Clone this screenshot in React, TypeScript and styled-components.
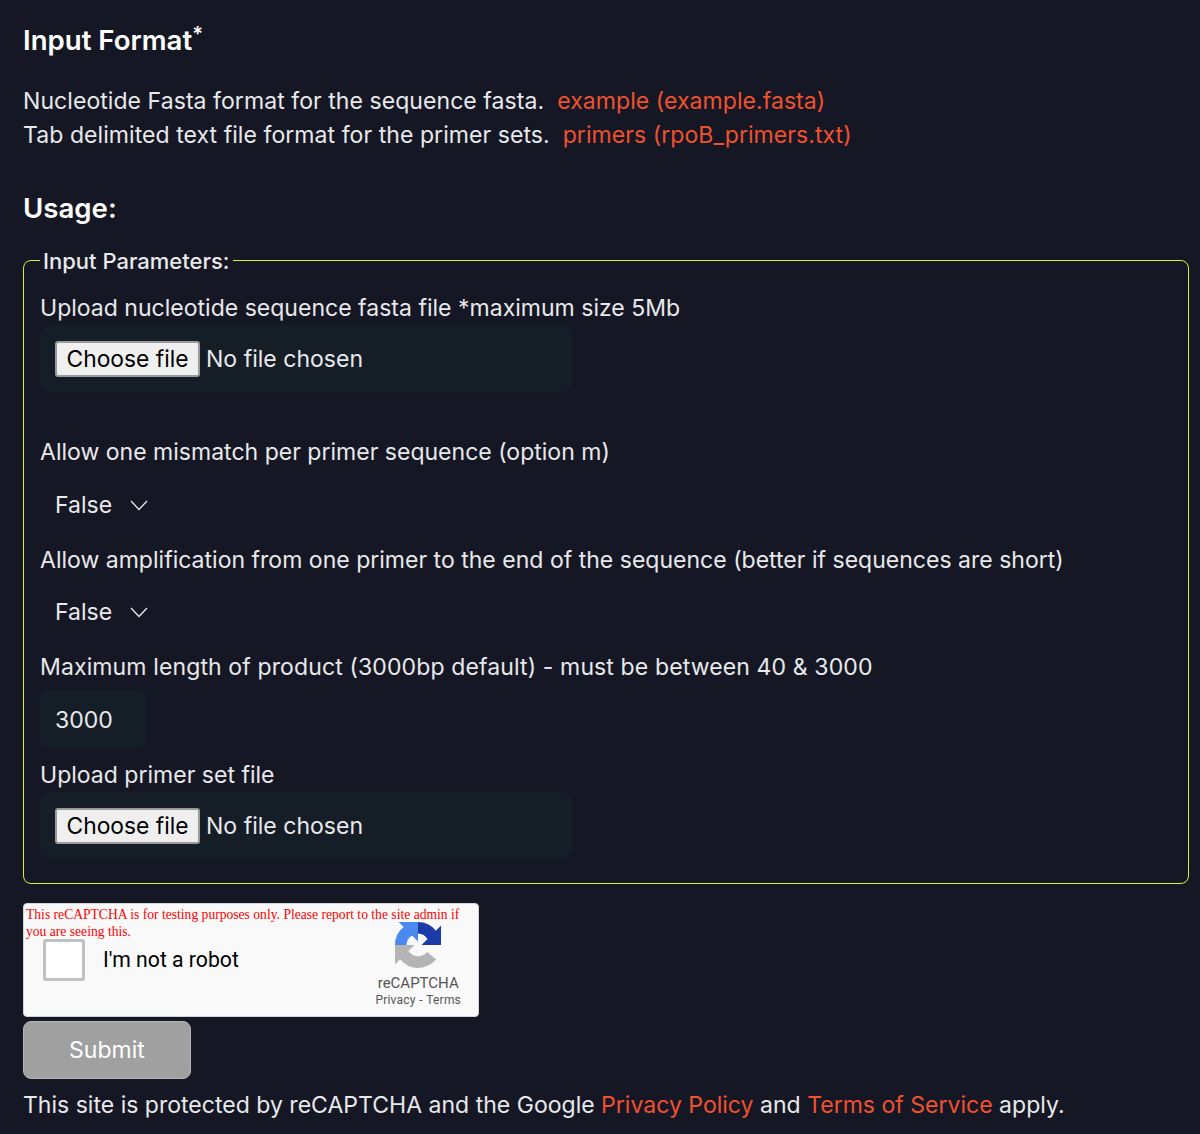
import React from 'react';
import styled, { createGlobalStyle } from 'styled-components';

const palette = {
  background: '#161724',
  text: '#e8e9eb',
  white: '#ffffff',
  link: '#f0512f',
  border: '#d9f02a',
  field: '#151d27',
};

const GlobalStyle = createGlobalStyle`
  html, body {
    margin: 0;
    background-color: ${palette.background};
  }
  body {
    font-family: Inter, "Liberation Sans", sans-serif;
    color: ${palette.text};
    font-size: 23.04px;
    line-height: 34px;
  }
`;

const Page = styled.div`
  display: flex;
  flex-direction: column;
  align-items: flex-start;
  height: 1134px;
  box-sizing: border-box;
  padding: 23px 11px 0 23px;
  overflow: hidden;
`;

const Heading = styled.h3`
  margin: 0;
  font-size: 27.6px;
  line-height: 34px;
  font-weight: 600;
  color: ${palette.white};
`;

const Asterisk = styled.sup`
  font-size: 20px;
  line-height: 0;
  vertical-align: 9px;
`;

const Paragraph = styled.p`
  margin: 27px 0 39px;
  letter-spacing: 0.05px;
`;

const OrangeLink = styled.a`
  color: ${palette.link};
  text-decoration: none;
`;

const ParametersFieldset = styled.fieldset`
  align-self: stretch;
  box-sizing: border-box;
  height: 638px;
  margin: 21px 0 19px;
  padding: 0 16px;
  border: 1px solid ${palette.border};
  border-radius: 8px;
`;

const ParametersLegend = styled.legend`
  padding: 2px 3px 0;
  font-size: 22px;
  line-height: 26px;
  font-weight: 500;
  color: ${palette.text};
`;

const FieldLabel = styled.label`
  display: block;
`;

const UploadLabel = styled(FieldLabel)`
  margin-top: 17px;
`;

const LengthLabel = styled(FieldLabel)`
  letter-spacing: 0.11px;
`;

const FileField = styled.div`
  display: flex;
  align-items: center;
  gap: 6px;
  box-sizing: border-box;
  width: 532px;
  height: 67px;
  padding-left: 15px;
  background-color: ${palette.field};
  border-radius: 10px;
`;

const ChooseFileButton = styled.button`
  box-sizing: border-box;
  width: 145px;
  height: 36px;
  padding: 0;
  font-family: inherit;
  font-size: 22.8px;
  color: #000;
  background-color: #efefef;
  border: 2px solid #9a9a9a;
  border-radius: 3px;
`;

const SelectValue = styled.div`
  display: flex;
  align-items: center;
  gap: 18px;
  box-sizing: border-box;
  height: 73.5px;
  padding: 0 0 2px 15px;
`;

const NumberField = styled.div`
  display: flex;
  align-items: center;
  box-sizing: border-box;
  width: 106px;
  height: 58px;
  padding: 2px 0 0 15px;
  margin: 6px 0 10px;
  background-color: ${palette.field};
  border-radius: 8px;
`;

const SpacedLabel = styled(FieldLabel)`
  margin-top: 43px;
`;

const CaptchaCard = styled.div`
  position: relative;
  display: flex;
  align-items: center;
  justify-content: space-between;
  box-sizing: border-box;
  width: 456px;
  height: 114px;
  padding: 0 17px 0 19px;
  background-color: #f9f9f9;
  border: 1px solid #d3d3d3;
  border-radius: 4px;
`;

const CaptchaWarning = styled.div`
  position: absolute;
  top: 2px;
  left: 2px;
  right: 8px;
  font-family: "Liberation Serif", serif;
  font-size: 13.6px;
  line-height: 17px;
  color: #ff0000;
`;

const CaptchaCheckGroup = styled.div`
  display: flex;
  align-items: center;
  gap: 18px;
`;

const CaptchaCheckbox = styled.div`
  box-sizing: border-box;
  width: 42px;
  height: 42px;
  background-color: #ffffff;
  border: 3px solid #c1c1c1;
  border-radius: 3px;
`;

const CaptchaLabel = styled.span`
  font-family: Roboto, sans-serif;
  font-size: 21.2px;
  color: #000;
`;

const CaptchaBrand = styled.div`
  display: flex;
  flex-direction: column;
  align-items: center;
  margin-top: 10px;
  font-family: Roboto, sans-serif;
  color: #555;
`;

const CaptchaBrandName = styled.div`
  margin-top: 5px;
  font-size: 15px;
  line-height: 20px;
`;

const CaptchaBrandLinks = styled.div`
  font-size: 12px;
  line-height: 15px;
  letter-spacing: 0.2px;
  word-spacing: 0.5px;
`;

const SubmitButton = styled.button`
  box-sizing: border-box;
  width: 168px;
  height: 58px;
  margin-top: 4px;
  font-family: inherit;
  font-size: 23.04px;
  color: ${palette.white};
  background-color: #a0a0a0;
  border: 1px solid #b5b5b5;
  border-radius: 8px;
`;

const Footnote = styled.p`
  margin: 9px 0 0;
`;

const Chevron = () => (
  <svg width="18" height="12" viewBox="0 0 18 12" fill="none" stroke={palette.text} strokeWidth="1.3">
    <path d="M1 2l8 8.5L17 2" />
  </svg>
);

const RecaptchaLogo = () => {
  const arrow = 'M32 0A32 32 0 0 1 56.9 12.1L64 5V32H37L45.3 23.7A16 16 0 0 0 32 16Z';
  return (
    <svg width="46" height="46" viewBox="0 0 64 64">
      <path d="M0 32V59L7.1 51.9A32 32 0 0 0 57.2 51.7L44.6 41.9A16 16 0 0 1 18.7 40.3L27 32Z" fill="#b4b4b4" />
      <path d={arrow} fill="#4a8af0" transform="rotate(-90 32 32)" />
      <path d={arrow} fill="#1c3aa9" />
    </svg>
  );
};

const FileInput = () => (
  <FileField>
    <ChooseFileButton type="button">Choose file</ChooseFileButton>
    <span>No file chosen</span>
  </FileField>
);

const SelectFalse = () => (
  <SelectValue>
    False
    <Chevron />
  </SelectValue>
);

export default function App() {
  return (
    <Page>
      <GlobalStyle />
      <Heading>
        Input Format<Asterisk>*</Asterisk>
      </Heading>
      <Paragraph>
        Nucleotide Fasta format for the sequence fasta.&nbsp; <OrangeLink>example (example.fasta)</OrangeLink>
        <br />
        Tab delimited text file format for the primer sets.&nbsp; <OrangeLink>primers (rpoB_primers.txt)</OrangeLink>
      </Paragraph>
      <Heading>Usage:</Heading>
      <ParametersFieldset>
        <ParametersLegend>Input Parameters:</ParametersLegend>
        <UploadLabel>Upload nucleotide sequence fasta file *maximum size 5Mb</UploadLabel>
        <FileInput />
        <SpacedLabel>Allow one mismatch per primer sequence (option m)</SpacedLabel>
        <SelectFalse />
        <FieldLabel>Allow amplification from one primer to the end of the sequence (better if sequences are short)</FieldLabel>
        <SelectFalse />
        <LengthLabel>Maximum length of product (3000bp default) - must be between 40 &amp; 3000</LengthLabel>
        <NumberField>3000</NumberField>
        <FieldLabel>Upload primer set file</FieldLabel>
        <FileInput />
      </ParametersFieldset>
      <CaptchaCard>
        <CaptchaWarning>
          This reCAPTCHA is for testing purposes only. Please report to the site admin if you are seeing this.
        </CaptchaWarning>
        <CaptchaCheckGroup>
          <CaptchaCheckbox />
          <CaptchaLabel>I'm not a robot</CaptchaLabel>
        </CaptchaCheckGroup>
        <CaptchaBrand>
          <RecaptchaLogo />
          <CaptchaBrandName>reCAPTCHA</CaptchaBrandName>
          <CaptchaBrandLinks>Privacy - Terms</CaptchaBrandLinks>
        </CaptchaBrand>
      </CaptchaCard>
      <SubmitButton type="button">Submit</SubmitButton>
      <Footnote>
        This site is protected by reCAPTCHA and the Google <OrangeLink>Privacy Policy</OrangeLink> and{' '}
        <OrangeLink>Terms of Service</OrangeLink> apply.
      </Footnote>
    </Page>
  );
}
